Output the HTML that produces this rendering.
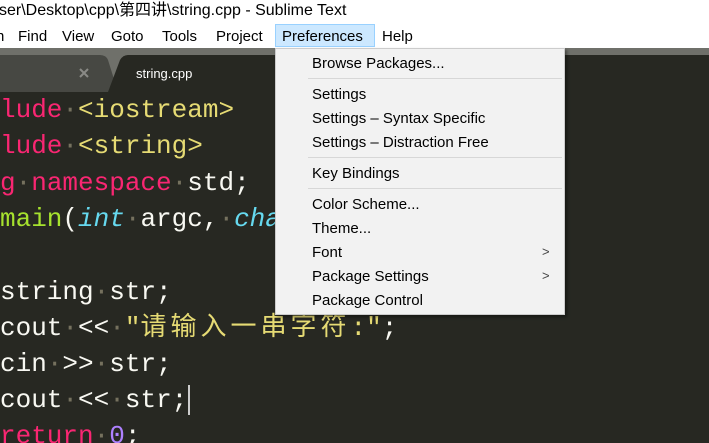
<!DOCTYPE html>
<html><head><meta charset="utf-8"><style>
*{margin:0;padding:0;box-sizing:border-box}
html,body{width:709px;height:443px;overflow:hidden}
body{background:#272822;position:relative;font-family:"Liberation Sans","Noto Sans CJK SC",sans-serif}
.title{position:absolute;left:0;top:0;width:709px;height:24px;background:#fff;font-size:16px;line-height:22px;color:#000;white-space:nowrap}
.title span{position:absolute;left:-1px;top:0}
.menubar{position:absolute;left:0;top:24px;width:709px;height:24px;background:#fff;font-size:15px;color:#000}
.menubar span{position:absolute;top:4px;white-space:nowrap}
.sel{position:absolute;left:275px;top:0;width:100px;height:23px;background:#cce8ff;border:1px solid #99d1ff}
.tabbar{position:absolute;left:0;top:48px;width:709px;height:44px;background:#6f706a}
.code{position:absolute;left:0;top:0;font-family:"Liberation Mono","Noto Sans CJK SC",monospace;font-size:26px;color:#f8f8f2}
.code div{position:absolute;left:0;white-space:pre;line-height:30px;height:30px}
.k{color:#f92672}.s{color:#e6db74}.g{color:#a6e22e}.t{color:#66d9ef;font-style:italic}.n{color:#ae81ff}.d{color:#75715e}
.cj{letter-spacing:4px}
.menu{position:absolute;left:275px;top:48px;width:290px;height:267px;background:#f2f2f2;border:1px solid #ccc;box-shadow:2px 2px 3px rgba(0,0,0,.4);font-size:15px;color:#000}
.menu .i{position:absolute;left:36px;white-space:nowrap;line-height:20px}
.menu .sep{position:absolute;left:32px;width:254px;height:1px;background:#d7d7d7}
.arr{position:absolute;left:266px;font-size:13px;color:#444}
</style></head><body>
<div class="title"><span>ser\Desktop\cpp\第四讲\string.cpp - Sublime Text</span></div>
<div class="menubar">
<div class="sel"></div>
<span style="left:-4px">n</span><span style="left:18px">Find</span><span style="left:62px">View</span><span style="left:111px">Goto</span><span style="left:162px">Tools</span><span style="left:216px">Project</span><span style="left:282px">Preferences</span><span style="left:382px">Help</span>
</div>
<div class="tabbar">
<svg width="709" height="44" style="position:absolute;left:0;top:0">
<path d="M0 7 H100 Q106 7 108 12 L118 44 H0Z" fill="#474843"/>
<path d="M108 44 L120 12 Q123 7 128 7 H709 V44Z" fill="#272822"/>
<path d="M80 21 l8 8 M88 21 l-8 8" stroke="#8a8a86" stroke-width="2"/>
<text x="136" y="30" fill="#fff" font-size="13" font-family="Liberation Sans">string.cpp</text>
</svg>
</div>
<div class="code">
<div style="top:95px"><span class="k">lude</span><span class="d">·</span><span class="s">&lt;iostream&gt;</span></div>
<div style="top:131px"><span class="k">lude</span><span class="d">·</span><span class="s">&lt;string&gt;</span></div>
<div style="top:168px"><span class="k">g</span><span class="d">·</span><span class="k">namespace</span><span class="d">·</span>std;</div>
<div style="top:204px"><span class="g">main</span>(<span class="t">int</span><span class="d">·</span>argc,<span class="d">·</span><span class="t">char</span></div>
<div style="top:277px">string<span class="d">·</span>str;</div>
<div style="top:313px">cout<span class="d">·</span>&lt;&lt;<span class="d">·</span><span class="s">"<span class="cj">请输入一串字符</span>:"</span>;</div>
<div style="top:349px">cin<span class="d">·</span>&gt;&gt;<span class="d">·</span>str;</div>
<div style="top:385px">cout<span class="d">·</span>&lt;&lt;<span class="d">·</span>str;<span style="border-left:2px solid #ccc;margin-left:1px"></span></div>
<div style="top:421px"><span class="k">return</span><span class="d">·</span><span class="n">0</span>;</div>
</div>
<div class="menu">
<div class="i" style="top:5px">Browse Packages...</div>
<div class="sep" style="top:29px"></div>
<div class="i" style="top:36px">Settings</div>
<div class="i" style="top:60px">Settings – Syntax Specific</div>
<div class="i" style="top:84px">Settings – Distraction Free</div>
<div class="sep" style="top:108px"></div>
<div class="i" style="top:115px">Key Bindings</div>
<div class="sep" style="top:139px"></div>
<div class="i" style="top:146px">Color Scheme...</div>
<div class="i" style="top:170px">Theme...</div>
<div class="i" style="top:194px">Font</div><div class="arr" style="top:195px">&gt;</div>
<div class="i" style="top:218px">Package Settings</div><div class="arr" style="top:219px">&gt;</div>
<div class="i" style="top:242px">Package Control</div>
</div>
</body></html>
